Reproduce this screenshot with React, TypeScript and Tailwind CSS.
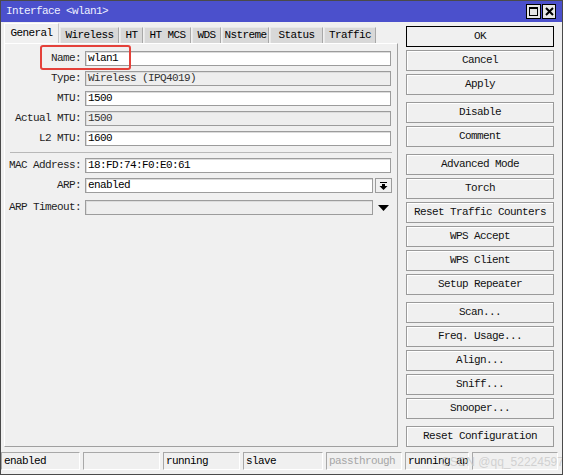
import React from 'react';

const tabs = [
  { label: 'General', w: 'w-[55px]', active: true },
  { label: 'Wireless', w: 'w-[59px]' },
  { label: 'HT', w: 'w-[23px]' },
  { label: 'HT MCS', w: 'w-[47px]' },
  { label: 'WDS', w: 'w-[29px]' },
  { label: 'Nstreme', w: 'w-[47px]' },
  { label: 'Status', w: 'w-[53px]' },
  { label: 'Traffic', w: 'w-[52px]' },
];

const buttonGroups = [
  ['Cancel', 'Apply'],
  ['Disable', 'Comment'],
  ['Advanced Mode', 'Torch', 'Reset Traffic Counters', 'WPS Accept', 'WPS Client', 'Setup Repeater'],
  ['Scan...', 'Freq. Usage...', 'Align...', 'Sniff...', 'Snooper...'],
  ['Reset Configuration'],
];

const statusCells = [
  { text: 'enabled', w: 'w-[79px]' },
  { text: '', w: 'w-[77px]' },
  { text: 'running', w: 'w-[77px]' },
  { text: 'slave', w: 'w-[80px]' },
  { text: 'passthrough', w: 'w-[76px]', dim: true },
  { text: 'running ap', w: 'w-[64px]' },
  { text: '', w: 'w-[86px]' },
];

const Field: React.FC<{ label: string; value?: string; readOnly?: boolean; extra?: React.ReactNode; narrow?: boolean }> = ({ label, value, readOnly, extra, narrow }) => (
  <div className="flex items-center h-[15px]">
    <div className="w-[76px] text-right text-[#1e1e1e] whitespace-pre">{label}</div>
    <div className="w-[4px]" />
    <div
      className={
        'h-[15px] border border-[#9c9c9c] shadow-[inset_1px_1px_0_#dcdcdc] px-[2px] leading-[13px] whitespace-pre ' +
        (readOnly ? 'bg-[#eeeeee] text-[#333] ' : 'bg-white text-black ') +
        (narrow ? 'w-[288px]' : 'w-[306px]')
      }
    >
      {value}
    </div>
    {extra}
  </div>
);

const Btn: React.FC<{ label: string; primary?: boolean }> = ({ label, primary }) => (
  <div
    className={
      'h-[21px] w-[148px] flex items-center justify-center bg-[#f0f0f0] text-[#111] whitespace-pre ' +
      (primary ? 'border border-black' : 'border border-[#9a9a9a] shadow-[inset_1px_1px_0_#ffffff]')
    }
  >
    {label}
  </div>
);

export default function App() {
  return (
    <div className="relative w-[563px] h-[475px] bg-[#f0f0f0] border border-[#4a4a4a] flex flex-col [font-family:'Liberation_Mono',monospace] text-[11px] tracking-[-0.6px] overflow-hidden">
      {/* title bar */}
      <div className="h-[21px] bg-[#4b50cc] flex items-center pl-[5px] pr-[6px] shrink-0">
        <span className="text-[#eef0ff] whitespace-pre">Interface &lt;wlan1&gt;</span>
        <div className="ml-auto flex gap-[1px]">
          <div className="w-[15px] h-[15px] bg-[#e6e6e6] border border-black flex items-center justify-center">
            <div className="w-[9px] h-[9px] border border-black border-t-2" />
          </div>
          <div className="w-[14px] h-[15px] bg-[#e6e6e6] border border-black flex items-center justify-center">
            <svg width="9" height="9" viewBox="0 0 9 9">
              <path d="M1 1 L8 8 M8 1 L1 8" stroke="black" strokeWidth="2" />
            </svg>
          </div>
        </div>
      </div>

      <div className="flex flex-1">
        {/* left: tabs + panel */}
        <div className="ml-[3px] w-[394px] flex flex-col">
          <div className="flex items-end gap-[1px] h-[20px] mt-[1px]">
            {tabs.map(t => (
              <div
                key={t.label}
                className={
                  t.w +
                  ' flex items-center justify-center whitespace-pre ' +
                  (t.active
                    ? 'h-[20px] bg-[#f0f0f0] border-t border-l border-r border-[#c8c8c8] border-t-white border-l-white'
                    : 'h-[16px] bg-[#d8d8d8] border-t border-l border-r border-t-[#e8e8e8] border-l-[#e8e8e8] border-r-[#a8a8a8]')
                }
              >
                {t.label}
              </div>
            ))}
          </div>
          <div className="h-[404px] border-t border-l border-white border-r border-r-[#a0a0a0] border-b border-b-[#a0a0a0] flex flex-col pt-[7px] relative">
            <div className="flex flex-col gap-[5px]">
              <Field label="Name:" value="wlan1" />
              <Field label="Type:" value="Wireless (IPQ4019)" readOnly />
              <Field label="MTU:" value="1500" />
              <Field label="Actual MTU:" value="1500" readOnly />
              <Field label="L2 MTU:" value="1600" />
            </div>
            <div className="ml-[5px] mt-[6px] w-[382px] h-[1px] bg-[#b8b8b8]" />
            <div className="flex flex-col mt-[5px]">
              <Field label="MAC Address:" value="18:FD:74:F0:E0:61" />
              <div className="h-[5px]" />
              <Field
                label="ARP:"
                value="enabled"
                narrow
                extra={
                  <div className="ml-[2px] w-[17px] h-[15px] border border-[#9c9c9c] bg-[#f0f0f0] flex items-center justify-center">
                    <svg width="9" height="10" viewBox="0 0 9 10">
                      <rect x="1" y="1" width="7" height="1" fill="black" />
                      <rect x="3" y="3" width="3" height="2" fill="black" />
                      <path d="M0.5 5 L8.5 5 L4.5 9 Z" fill="black" />
                    </svg>
                  </div>
                }
              />
              <div className="h-[7px]" />
              <Field
                label="ARP Timeout:"
                readOnly
                narrow
                extra={
                  <div className="ml-[4px] w-[12px] flex items-center justify-center">
                    <svg width="11" height="6" viewBox="0 0 11 6">
                      <path d="M0 0 L11 0 L5.5 6 Z" fill="black" />
                    </svg>
                  </div>
                }
              />
            </div>
            {/* red highlight */}
            <div className="absolute left-[35px] top-[1px] w-[91px] h-[25px] border-2 border-[#e4413a] rounded-[3px]" />
          </div>
        </div>

        {/* right: buttons */}
        <div className="ml-[8px] mt-[4px] flex flex-col">
          <Btn label="OK" primary />
          <div className="h-[3px]" />
          {buttonGroups.map((g, i) => (
            <div key={i} className={'flex flex-col gap-[3px] ' + (i > 0 ? 'mt-[7px]' : '')}>
              {g.map(b => (
                <Btn key={b} label={b} />
              ))}
            </div>
          ))}
        </div>
      </div>

      {/* status bar */}
      <div className="h-[22px] flex items-start gap-[3px] pb-[3px] shrink-0">
        {statusCells.map((c, i) => (
          <div
            key={i}
            className={
              c.w +
              ' h-[18px] border border-[#a8a8a8] border-r-white border-b-white flex items-center px-[2px] whitespace-pre ' +
              (c.dim ? 'text-[#a6a6a6]' : 'text-black')
            }
          >
            {c.text}
          </div>
        ))}
      </div>

      {/* watermark */}
      <div className="absolute left-[440px] top-[454px] whitespace-nowrap [font-family:'Liberation_Sans',sans-serif] text-[12px] leading-[15px] tracking-normal text-[#c9c9c9]/80 pointer-events-none">
        CSDN @qq_52224597
      </div>
    </div>
  );
}
